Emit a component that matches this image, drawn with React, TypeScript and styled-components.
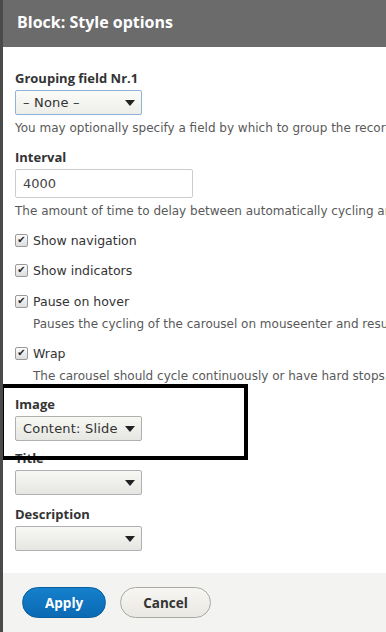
import React from 'react';
import styled, { createGlobalStyle } from 'styled-components';

const GlobalStyle = createGlobalStyle`
  html, body {
    margin: 0;
    padding: 0;
    background: #fff;
  }
  body {
    font-family: "DejaVu Sans", Verdana, sans-serif;
    color: #333;
  }
`;

const Dialog = styled.div`
  position: relative;
  display: flex;
  flex-direction: column;
  width: 386px;
  height: 632px;
  overflow: hidden;
  background: #fff;
  border-left: 3px solid #4a4a4a;
  box-sizing: border-box;
`;

const Header = styled.div`
  height: 47px;
  margin-left: -3px;
  padding: 0 0 4px 17px;
  box-sizing: border-box;
  display: flex;
  align-items: center;
  background: #6b6b6b;
  color: #fff;
  font-family: "Open Sans", sans-serif;
  font-weight: 700;
  font-size: 16px;
  flex-shrink: 0;
`;

const Body = styled.div`
  flex: 1;
  padding: 22px 0 0 12px;
  display: flex;
  flex-direction: column;
  overflow: hidden;
`;

const Field = styled.div<{ $gap?: number }>`
  display: flex;
  flex-direction: column;
  align-items: flex-start;
  margin-bottom: ${(p) => p.$gap ?? 10}px;
`;

const Label = styled.div`
  font-family: "Open Sans", sans-serif;
  font-weight: 700;
  font-size: 13px;
  color: #333;
  line-height: 18px;
  margin-bottom: 3px;
`;

const Select = styled.div<{ $focused?: boolean }>`
  box-sizing: border-box;
  width: 127px;
  height: 25px;
  display: flex;
  align-items: center;
  padding: 0 6px 0 7px;
  border: 1px solid ${(p) => (p.$focused ? '#8fb2dc' : '#b0b0b0')};
  border-radius: 2px;
  background: ${(p) =>
    p.$focused
      ? 'linear-gradient(#fbfbf8, #ededea)'
      : 'linear-gradient(#f7f7f4, #e6e6e2)'};
  font-size: 13px;
  letter-spacing: 0.2px;
  color: #333;
`;

const Arrow = styled.span`
  width: 0;
  height: 0;
  border-left: 5px solid transparent;
  border-right: 5px solid transparent;
  border-top: 6px solid #222;
  margin-left: auto;
`;

const TextInput = styled.div`
  box-sizing: border-box;
  width: 178px;
  height: 29px;
  display: flex;
  align-items: center;
  padding: 0 7px;
  border: 1px solid #ccc;
  border-radius: 2px;
  font-size: 13px;
  color: #444;
  background: #fff;
`;

const Description = styled.div<{ $indent?: boolean }>`
  font-size: 12px;
  color: #595959;
  white-space: nowrap;
  line-height: 16px;
  margin-top: ${(p) => (p.$indent ? 6 : 5)}px;
  padding-left: ${(p) => (p.$indent ? 18 : 0)}px;
`;

const CheckRow = styled.div`
  display: flex;
  align-items: center;
  gap: 5px;
  font-size: 12.5px;
  color: #333;
  height: 18px;
`;

const CheckBox = styled.span`
  box-sizing: border-box;
  width: 13px;
  height: 13px;
  border: 1px solid #9a9a9a;
  border-radius: 2px;
  background: linear-gradient(#fdfdfd, #dcdcdc);
  display: flex;
  align-items: center;
  justify-content: center;
  font-size: 10px;
  line-height: 1;
  color: #222;
`;

const Highlight = styled.div`
  position: absolute;
  left: -3px;
  top: 384px;
  width: 248px;
  height: 76px;
  border: 4px solid #000;
  box-sizing: border-box;
  pointer-events: none;
`;

const Footer = styled.div`
  flex-shrink: 0;
  height: 59px;
  background: #f3f3f2;
  display: flex;
  align-items: center;
  gap: 14px;
  padding-left: 19px;
`;

const Button = styled.div<{ $primary?: boolean }>`
  box-sizing: border-box;
  height: 31px;
  padding: 0 22px;
  border-radius: 16px;
  display: flex;
  align-items: center;
  font-family: "Open Sans", sans-serif;
  font-weight: 700;
  font-size: 13.5px;
  color: ${(p) => (p.$primary ? '#fff' : '#333')};
  background: ${(p) =>
    p.$primary ? 'linear-gradient(#1580cc, #0b69b3)' : 'linear-gradient(#f7f6f2, #e9e8e2)'};
  border: 1px solid ${(p) => (p.$primary ? '#0a5e9e' : '#a8a8a4')};
`;

const Check = ({ label }: { label: string }) => (
  <CheckRow>
    <CheckBox>✔</CheckBox>
    {label}
  </CheckRow>
);

const App = () => (
  <>
    <GlobalStyle />
    <Dialog>
      <Header>Block: Style options</Header>
      <Body>
        <Field $gap={12}>
          <Label>Grouping field Nr.1</Label>
          <Select $focused>
            – None –<Arrow />
          </Select>
          <Description>You may optionally specify a field by which to group the records.</Description>
        </Field>
        <Field $gap={12}>
          <Label>Interval</Label>
          <TextInput>4000</TextInput>
          <Description>The amount of time to delay between automatically cycling an item.</Description>
        </Field>
        <Field $gap={12}>
          <Check label="Show navigation" />
        </Field>
        <Field $gap={13}>
          <Check label="Show indicators" />
        </Field>
        <Field $gap={12}>
          <Check label="Pause on hover" />
          <Description $indent>Pauses the cycling of the carousel on mouseenter and resumes it.</Description>
        </Field>
        <Field $gap={11}>
          <Check label="Wrap" />
          <Description $indent>The carousel should cycle continuously or have hard stops.</Description>
        </Field>
        <Field $gap={8}>
          <Label>Image</Label>
          <Select>
            Content: Slide<Arrow />
          </Select>
        </Field>
        <Field $gap={10}>
          <Label>Title</Label>
          <Select>
            <Arrow />
          </Select>
        </Field>
        <Field>
          <Label>Description</Label>
          <Select>
            <Arrow />
          </Select>
        </Field>
      </Body>
      <Footer>
        <Button $primary>Apply</Button>
        <Button>Cancel</Button>
      </Footer>
      <Highlight />
    </Dialog>
  </>
);

export default App;
